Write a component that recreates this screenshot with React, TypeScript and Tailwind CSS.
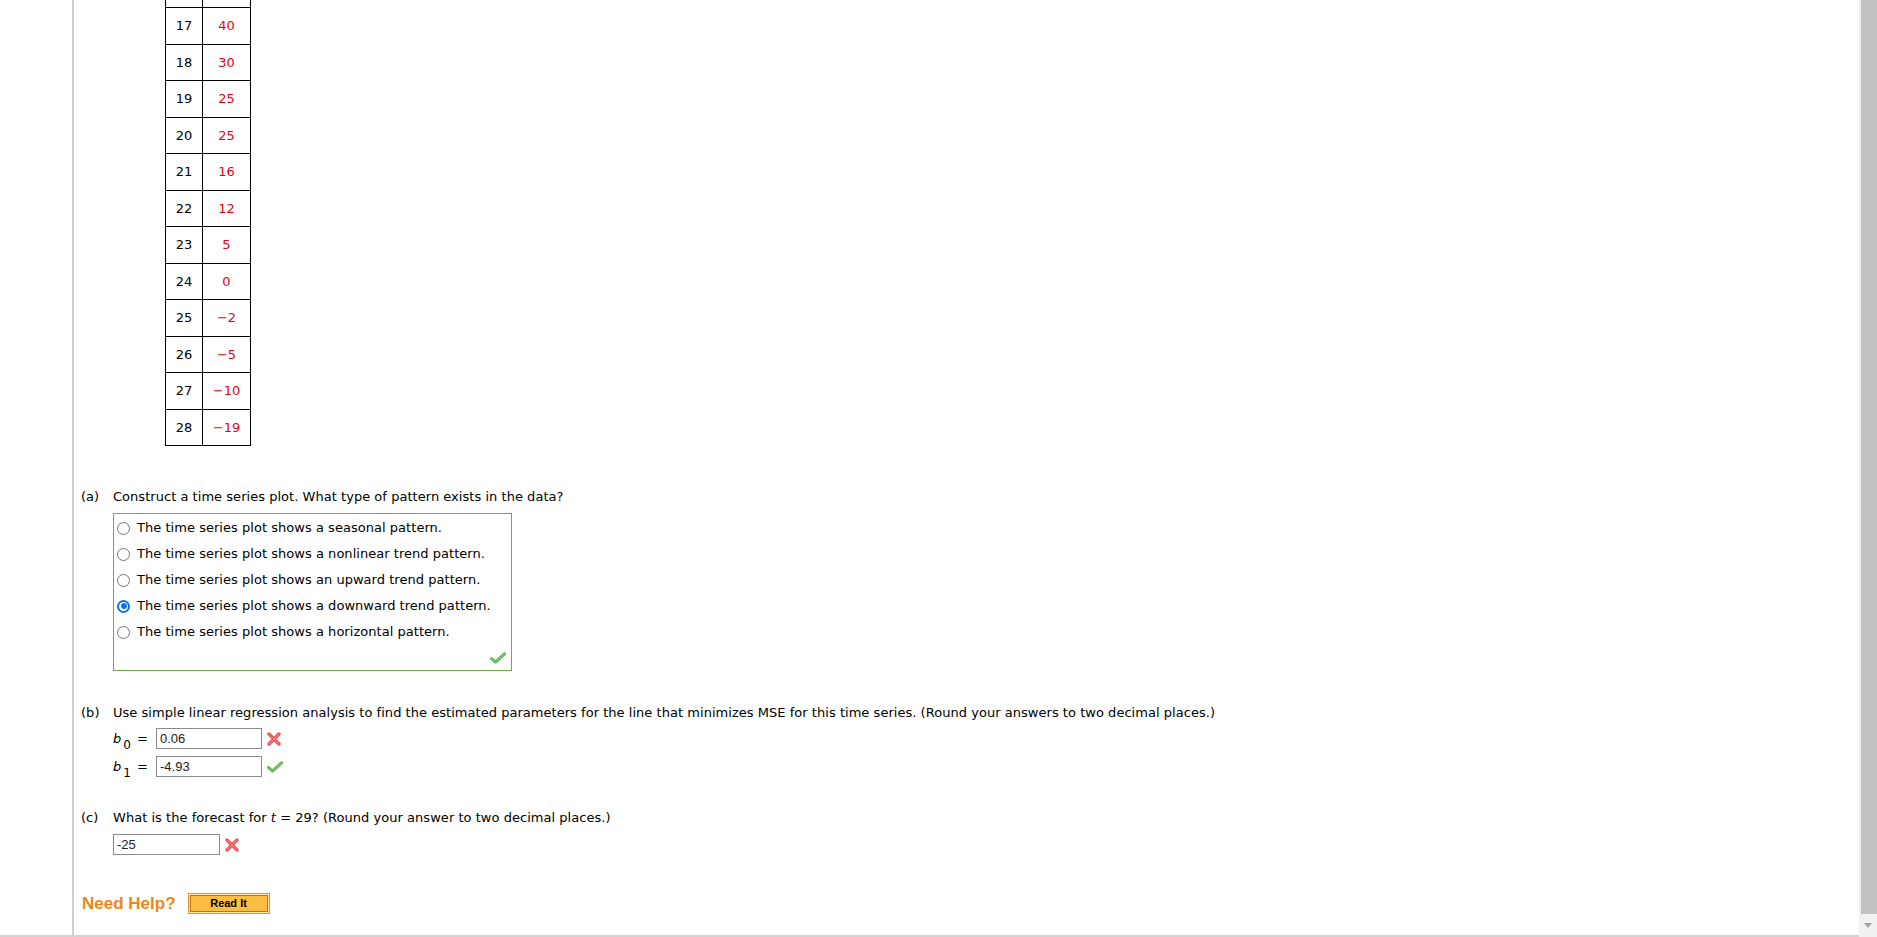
const rows: [number, string][] = [
  [17, '40'],
  [18, '30'],
  [19, '25'],
  [20, '25'],
  [21, '16'],
  [22, '12'],
  [23, '5'],
  [24, '0'],
  [25, '\u22122'],
  [26, '\u22125'],
  [27, '\u221210'],
  [28, '\u221219'],
];

const options = [
  'The time series plot shows a seasonal pattern.',
  'The time series plot shows a nonlinear trend pattern.',
  'The time series plot shows an upward trend pattern.',
  'The time series plot shows a downward trend pattern.',
  'The time series plot shows a horizontal pattern.',
];

function Check() {
  return (
    <svg width="16" height="12" viewBox="0 0 16 12" className="shrink-0">
      <path d="M1.5 6.5 L5.5 10.2 L14.5 1.8" fill="none" stroke="#5fae4f" strokeWidth="3" strokeLinecap="round" strokeLinejoin="round" />
      <path d="M1.5 6.5 L5.5 10.2 L14.5 1.8" fill="none" stroke="#8fd07f" strokeWidth="1" strokeLinecap="round" strokeLinejoin="round" />
    </svg>
  );
}

function Cross() {
  return (
    <svg width="14" height="14" viewBox="0 0 14 14" className="shrink-0">
      <path d="M2 2 L12 12 M12 2 L2 12" fill="none" stroke="#ee5252" strokeWidth="3.4" strokeLinecap="round" />
      <path d="M2 2 L12 12 M12 2 L2 12" fill="none" stroke="#f88a8a" strokeWidth="1" strokeLinecap="round" />
    </svg>
  );
}

function Radio({ checked }: { checked?: boolean }) {
  if (checked) {
    return (
      <div className="w-[13px] h-[13px] rounded-full border-2 border-[#0b75f0] bg-white flex items-center justify-center shrink-0">
        <div className="w-[6px] h-[6px] rounded-full bg-[#0b75f0]" />
      </div>
    );
  }
  return <div className="w-[13px] h-[13px] rounded-full border border-[#767676] bg-white shrink-0" />;
}

function Field({ value, width }: { value: string; width: string }) {
  return (
    <div
      className={`${width} h-[21px] border border-[#8a8a8a] bg-white pl-[3px] flex items-center text-[13px] tracking-normal text-[#222] font-['Liberation_Sans',Arial,sans-serif]`}
    >
      {value}
    </div>
  );
}

function Coef({ n }: { n: string }) {
  return (
    <span className="w-[24px] h-[21px] flex items-center">
      <i className="leading-none">b</i>
      <span className="ml-[2px] text-[12px] leading-none relative top-[6px]">{n}</span>
    </span>
  );
}

export default function App() {
  return (
    <div className="w-[1877px] h-[937px] flex overflow-hidden bg-white text-black font-['DejaVu_Sans',Verdana,sans-serif] text-[13px] tracking-[0.035px]">
      <div className="flex-1 h-full border-b-2 border-[#d2d2d2]">
        <div className="ml-[72px] h-full border-l-2 border-[#cfcfcf]">
          {/* data table, scrolled */}
          <div className="ml-[91px] w-fit border-l border-black">
            <div className="flex h-[8px] border-b border-black">
              <div className="w-[37px] border-r border-black" />
              <div className="w-[48px] border-r border-black" />
            </div>
            {rows.map(([t, v], i) => (
              <div key={t} className={`flex border-b border-black ${i % 2 === 0 ? 'h-[37px]' : 'h-[36px]'}`}>
                <div className="w-[37px] border-r border-black flex items-center justify-center">{t}</div>
                <div className="w-[48px] border-r border-black flex items-center justify-center text-[#e8000f]">{v}</div>
              </div>
            ))}
          </div>

          <div className="pl-[7px]">
            {/* (a) */}
            <div className="mt-[43px] flex h-[16px] items-center">
              <span className="w-[32px]">(a)</span>
              <span>Construct a time series plot. What type of pattern exists in the data?</span>
            </div>
            <div className="ml-[32px] mt-[8px] w-[399px] border border-[#6fac46] pt-[1px]">
              {options.map((o, i) => (
                <div key={o} className="h-[26px] flex items-center gap-[7px] pl-[3px]">
                  <Radio checked={i === 3} />
                  <span>{o}</span>
                </div>
              ))}
              <div className="flex justify-end pr-[5px] pt-[7px] pb-[6px]">
                <Check />
              </div>
            </div>

            {/* (b) */}
            <div className="mt-[34px] flex h-[16px] items-center">
              <span className="w-[32px]">(b)</span>
              <span>
                Use simple linear regression analysis to find the estimated parameters for the line that minimizes MSE for
                this time series. (Round your answers to two decimal places.)
              </span>
            </div>
            <div className="ml-[32px] mt-[7px] flex flex-col gap-[7px]">
              <div className="flex items-center h-[21px]">
                <Coef n="0" />
                <span className="w-[19px]">=</span>
                <Field value="0.06" width="w-[106px]" />
                <span className="ml-[5px]">
                  <Cross />
                </span>
              </div>
              <div className="flex items-center h-[21px]">
                <Coef n="1" />
                <span className="w-[19px]">=</span>
                <Field value="-4.93" width="w-[106px]" />
                <span className="ml-[5px]">
                  <Check />
                </span>
              </div>
            </div>

            {/* (c) */}
            <div className="mt-[33px] flex h-[16px] items-center">
              <span className="w-[32px]">(c)</span>
              <span>
                What is the forecast for <i>t</i> = 29? (Round your answer to two decimal places.)
              </span>
            </div>
            <div className="ml-[32px] mt-[8px] flex items-center">
              <Field value="-25" width="w-[107px]" />
              <span className="ml-[5px]">
                <Cross />
              </span>
            </div>

            {/* help */}
            <div className="mt-[38px] ml-[1px] flex items-center gap-[12px] h-[21px] tracking-normal">
              <span className="font-['Liberation_Sans',Arial,sans-serif] font-bold text-[17px] text-[#f08612]">Need Help?</span>
              <div className="w-[82px] h-[21px] border border-[#e8912f] bg-[#fde3a8] p-[1px]">
                <div className="h-full border border-[#b8781e] bg-[#fbbd44] flex items-center justify-center font-['Liberation_Sans',Arial,sans-serif] font-bold text-[11px] text-black">
                  Read It
                </div>
              </div>
            </div>
          </div>
        </div>
      </div>

      {/* scrollbar */}
      <div className="w-[18px] h-full bg-[#f1f1f1] flex flex-col items-end">
        <div className="w-[16px] h-[914px] bg-[#c1c1c1]" />
        <div className="w-full flex-1 flex items-center justify-center">
          <div className="w-0 h-0 border-l-[4px] border-r-[4px] border-t-[5px] border-l-transparent border-r-transparent border-t-[#a3a3a3]" />
        </div>
      </div>
    </div>
  );
}
